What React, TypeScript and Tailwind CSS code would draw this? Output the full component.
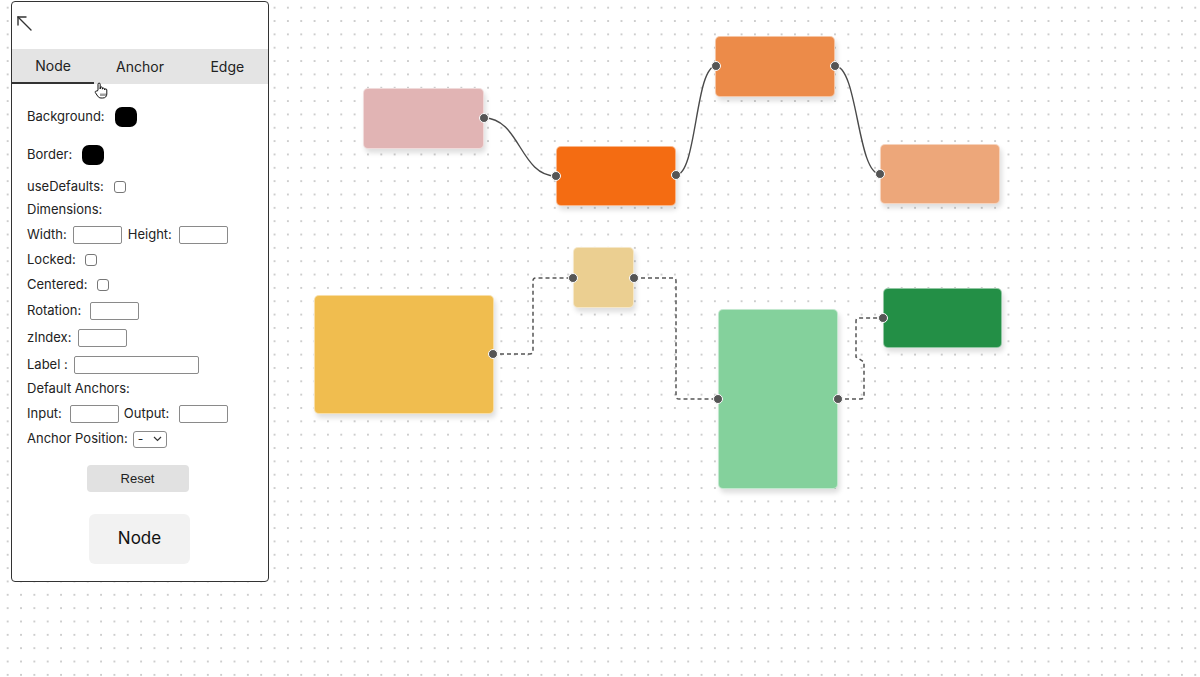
import React from "react";

const font = { fontFamily: "Inter, 'Noto Sans', sans-serif" };

function Swatch() {
  return <div className="w-[22px] h-[20px] rounded-[7px] bg-black" />;
}
function Check() {
  return <div className="w-[12px] h-[12px] rounded-[3px] border border-[#777] bg-white" />;
}
function Field({ w }: { w: number }) {
  return (
    <div
      className="h-[18px] rounded-[2px] border border-[#8a8a8a] bg-white"
      style={{ width: w }}
    />
  );
}

type N = { x: number; y: number; w: number; h: number; c: string };
const nodes: N[] = [
  { x: 363, y: 88, w: 121, h: 61, c: "#e1b4b4" },
  { x: 556, y: 146, w: 120, h: 60, c: "#f46c12" },
  { x: 715, y: 36, w: 120, h: 61, c: "#ec8b49" },
  { x: 880, y: 144, w: 120, h: 60, c: "#eda77a" },
  { x: 314, y: 295, w: 180, h: 119, c: "#f0bd4f" },
  { x: 573, y: 247, w: 61, h: 61, c: "#ebcf91" },
  { x: 718, y: 309, w: 120, h: 180, c: "#84d19c" },
  { x: 883, y: 288, w: 119, h: 60, c: "#238f46" },
];

export default function App() {
  return (
    <div
      className="relative w-full h-[677px] overflow-hidden bg-white text-[#111]"
      style={{
        ...font,
        backgroundImage: "radial-gradient(circle, #cdcdcd 0.7px, transparent 1px)",
        backgroundSize: "13.35px 13.35px",
        backgroundPosition: "1px 1px",
      }}
    >
      {/* canvas nodes */}
      {nodes.map((n, i) => (
        <div
          key={i}
          className="absolute rounded-[5px] border border-white/50 shadow-[2px_4px_5px_rgba(0,0,0,0.13)]"
          style={{ left: n.x, top: n.y, width: n.w, height: n.h, background: n.c }}
        />
      ))}
      <svg className="absolute left-0 top-0" width="1200" height="677" fill="none">
        <g stroke="#4a4a4a" strokeWidth="1.4">
          <path d="M484 118 C520 118 520 176 556 176" />
          <path d="M676 175 C697 175 695 66 716 66" />
          <path d="M835 66 C858 66 857 174 880 174" />
        </g>
        <g stroke="#555" strokeWidth="1.5" strokeDasharray="4 3">
          <path d="M493 354 H530 Q533 354 533 351 V281 Q533 278 536 278 H573" />
          <path d="M634 278 H673 Q676 278 676 281 V396 Q676 399 679 399 H718" />
          <path d="M838 399 H861 Q864 399 864 396 V362 L856 357 V321 Q856 318 859 318 H883" />
        </g>
        <g fill="#555" stroke="#fff" strokeWidth="1">
          {[
            [484, 118], [556, 176], [676, 175], [716, 66], [835, 66], [880, 174],
            [493, 354], [573, 278], [634, 278], [718, 399], [838, 399], [883, 318],
          ].map(([x, y], i) => (
            <circle key={i} cx={x} cy={y} r="4.5" />
          ))}
        </g>
      </svg>

      {/* side panel */}
      <div className="absolute left-[11px] top-[1px] w-[258px] h-[581px] rounded-[4px] border border-[#333] bg-white flex flex-col">
        <div className="h-[47px] pl-[4px] pt-[13px]">
          <svg width="16" height="16" viewBox="0 0 16 16" fill="none" stroke="#333" strokeWidth="1.4" strokeLinecap="round">
            <path d="M2 10 V2 H10" />
            <path d="M2 2 L15 15" />
          </svg>
        </div>
        <div className="relative h-[35px] bg-[#e4e4e4] grid grid-cols-3 text-[14px] text-[#222]">
          <div className="flex justify-center pt-[6px] pr-[3px]">Node</div>
          <div className="flex justify-center pt-[7px]">Anchor</div>
          <div className="flex justify-center pt-[7px] pl-[4px]">Edge</div>
          <div className="absolute left-0 bottom-[0px] w-[82px] h-[2.5px] bg-[#333]" />
        </div>

        <div className="flex flex-col pl-[15px] text-[13px] text-[#222]">
          <div className="mt-[21px] h-[24px] flex items-center gap-[10px]">
            <span>Background:</span>
            <Swatch />
          </div>
          <div className="mt-[14px] h-[24px] flex items-center gap-[10px]">
            <span>Border:</span>
            <Swatch />
          </div>
          <div className="mt-[10px] h-[20px] flex items-center gap-[10px]">
            <span>useDefaults:</span>
            <Check />
          </div>
          <div className="mt-[3px] h-[20px] flex items-center">Dimensions:</div>
          <div className="mt-[5px] h-[20px] flex items-center">
            <span>Width:</span>
            <span className="ml-[6px]"><Field w={49} /></span>
            <span className="ml-[6px]">Height:</span>
            <span className="ml-[7px]"><Field w={49} /></span>
          </div>
          <div className="mt-[5px] h-[20px] flex items-center gap-[9px]">
            <span>Locked:</span>
            <Check />
          </div>
          <div className="mt-[5px] h-[20px] flex items-center gap-[10px]">
            <span>Centered:</span>
            <Check />
          </div>
          <div className="mt-[6px] h-[20px] flex items-center gap-[9px]">
            <span>Rotation:</span>
            <Field w={49} />
          </div>
          <div className="mt-[7px] h-[20px] flex items-center gap-[7px]">
            <span>zIndex:</span>
            <Field w={49} />
          </div>
          <div className="mt-[7px] h-[20px] flex items-center gap-[6px]">
            <span>Label :</span>
            <Field w={125} />
          </div>
          <div className="mt-[4px] h-[20px] flex items-center">Default Anchors:</div>
          <div className="mt-[5px] h-[20px] flex items-center">
            <span>Input:</span>
            <span className="ml-[8px]"><Field w={49} /></span>
            <span className="ml-[5px]">Output:</span>
            <span className="ml-[10px]"><Field w={49} /></span>
          </div>
          <div className="mt-[5px] h-[20px] flex items-center gap-[5px]">
            <span>Anchor Position:</span>
            <div className="w-[34px] h-[17px] rounded-[3px] border border-[#8a8a8a] flex items-center justify-between px-[4px] text-[12px]">
              <span>-</span>
              <svg width="9" height="6" viewBox="0 0 9 6" fill="none" stroke="#333" strokeWidth="1.2">
                <path d="M1 1 L4.5 4.5 L8 1" />
              </svg>
            </div>
          </div>
        </div>

        <div className="mt-[16px] flex justify-center pr-[5px]">
          <div
            className="w-[102px] h-[27px] rounded-[4px] bg-[#e1e1e1] flex items-center justify-center text-[13px] text-[#222]"
            style={{ fontFamily: "'Liberation Sans', Arial, sans-serif" }}
          >
            Reset
          </div>
        </div>
        <div className="mt-[22px] flex justify-center pr-[1px]">
          <div className="w-[101px] h-[50px] rounded-[6px] bg-[#f2f2f2] flex items-center justify-center text-[17px] text-[#111]">
            Node
          </div>
        </div>
      </div>

      {/* cursor */}
      <svg className="absolute left-[94px] top-[82px]" width="15" height="17" viewBox="0 0 15 17" fill="#fff" stroke="#111" strokeWidth="1" strokeLinejoin="round">
        <path d="M4 8 V2.2 a1.1 1.1 0 0 1 2.2 0 V7 V6 a1.1 1.1 0 0 1 2.2 0 V7.2 a1.1 1.1 0 0 1 2.2 0 V8 a1.1 1.1 0 0 1 2.2 0 V12 c0 2.5 -1.6 4 -4 4 H7 c-1.6 0 -2.5 -0.8 -3.4 -2 L1.3 10.5 a1.1 1.1 0 0 1 1.8 -1.2 Z" />
        <path d="M7 11.5 V14 M9 11.5 V14 M11 11.5 V14" strokeWidth="0.8" />
      </svg>
    </div>
  );
}
